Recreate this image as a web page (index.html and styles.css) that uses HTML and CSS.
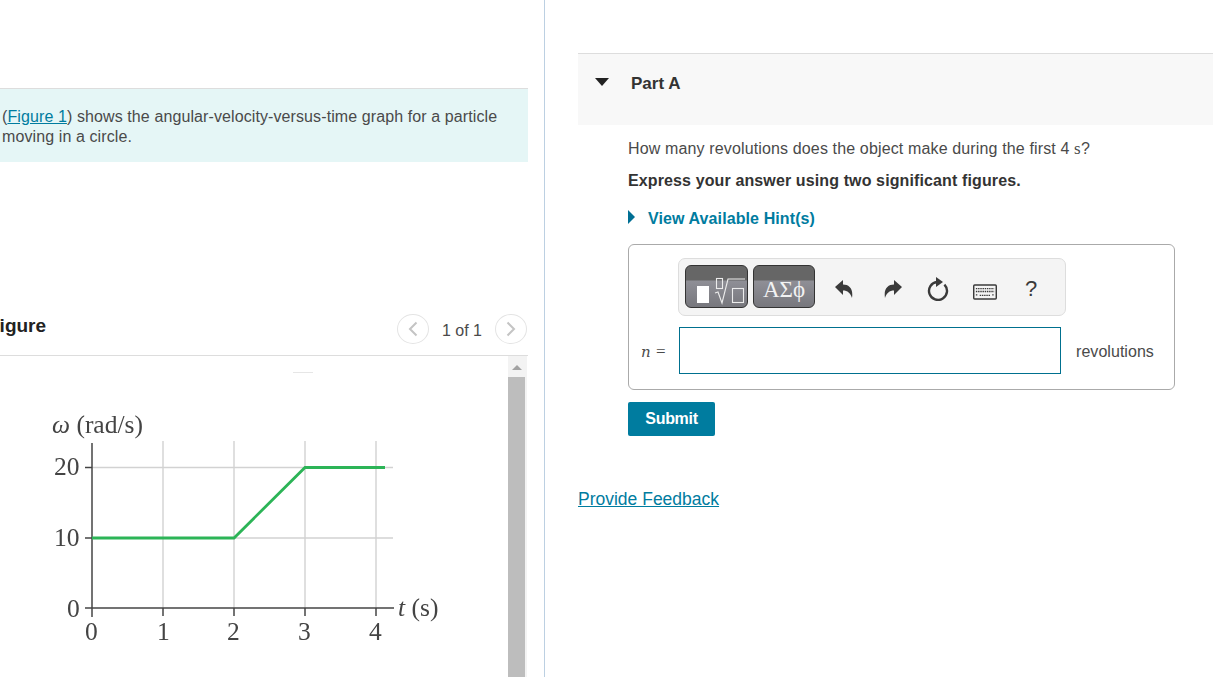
FILE: index.html
```html
<!DOCTYPE html>
<html lang="en">
<head>
<meta charset="utf-8">
<title>Part A</title>
<link rel="stylesheet" href="styles.css">
</head>
<body>
<div class="page">
  <section class="left">
    <p class="intro">(<a href="#">Figure 1</a>) shows the angular-velocity-versus-time graph for a particle moving in a circle.</p>
    <header class="fig-head">
      <h2 class="fig-title">Figure</h2>
      <div class="pager">
        <span class="page-btn"><svg width="10" height="16" viewBox="0 0 10 16"><path d="M8.5 1.500 2 8l6.500 6.500" fill="none" stroke="#c4c4c4" stroke-width="2"/></svg></span>
        <span class="page-count">1 of 1</span>
        <span class="page-btn"><svg width="10" height="16" viewBox="0 0 10 16"><path d="M1.500 1.500 8 8l-6.500 6.500" fill="none" stroke="#c4c4c4" stroke-width="2"/></svg></span>
      </div>
    </header>
    <div class="fig-body">
      <svg class="graph" width="508" height="321" viewBox="0 356 508 321">
        <line x1="293" y1="372.5" x2="313" y2="372.5" stroke="#e6e6e6"/>
        <g stroke="#d2d2d2" stroke-width="1.4">
          <line x1="163" y1="441" x2="163" y2="608"/>
          <line x1="234" y1="441" x2="234" y2="608"/>
          <line x1="305" y1="441" x2="305" y2="608"/>
          <line x1="376" y1="441" x2="376" y2="608"/>
          <line x1="92" y1="467.500" x2="393" y2="467.500"/>
          <line x1="92" y1="538" x2="393" y2="538"/>
        </g>
        <g stroke="#444" stroke-width="1.500">
          <line x1="92" y1="443" x2="92" y2="617"/>
          <line x1="85" y1="608" x2="394" y2="608"/>
          <line x1="85" y1="467.500" x2="92" y2="467.500"/>
          <line x1="85" y1="538" x2="92" y2="538"/>
          <line x1="163" y1="608" x2="163" y2="616"/>
          <line x1="234" y1="608" x2="234" y2="616"/>
          <line x1="305" y1="608" x2="305" y2="616"/>
          <line x1="376" y1="608" x2="376" y2="616"/>
        </g>
        <polyline points="92,538 234,538 305,467.500 385,467.500" fill="none" stroke="#2cb457" stroke-width="2.800"/>
        <g class="g-text">
          <text x="52" y="433"><tspan class="g-ital">ω</tspan> (rad/s)</text>
          <text x="54" y="475">20</text>
          <text x="54" y="546">10</text>
          <text x="67" y="617">0</text>
          <text x="85" y="640">0</text>
          <text x="157" y="640">1</text>
          <text x="227" y="640">2</text>
          <text x="298" y="640">3</text>
          <text x="369" y="640">4</text>
          <text x="398" y="616"><tspan class="g-ital">t</tspan> (s)</text>
        </g>
      </svg>
      <div class="scrollbar">
        <span class="scroll-up"></span>
        <span class="scroll-thumb"></span>
      </div>
    </div>
  </section>
  <main class="right">
    <div class="part-head">
      <span class="caret-down"></span>
      <h1 class="part-title">Part A</h1>
    </div>
    <div class="part-body">
      <p class="question">How many revolutions does the object make during the first 4 <span class="unit">s</span>?</p>
      <p class="instruction">Express your answer using two significant figures.</p>
      <a class="hint" href="#"><span class="caret-right"></span>View Available Hint(s)</a>
      <div class="answer">
        <div class="toolbar">
          <span class="tpl-btn tpl-wide">
            <svg width="61" height="41" viewBox="0 0 61 41">
              <rect x="11" y="20" width="12" height="17" fill="#fff"/>
              <g fill="none" stroke="#ececec" stroke-width="1.100">
                <rect x="30.500" y="12.500" width="6" height="10"/>
                <rect x="46.500" y="22.500" width="11" height="14"/>
                <path d="M29 27l3-1 4 11 6-24h17"/>
              </g>
            </svg>
          </span>
          <span class="tpl-btn tpl-greek">ΑΣϕ</span>
          <span class="tool tool-undo"><svg width="18" height="20" viewBox="0 0 18 20"><path d="M0 8 8 1v4.500c6 0 10.500 4 9 13.500-1.500-5-4.500-7.500-9-7.500V16z" fill="#3a3a3a"/></svg></span>
          <span class="tool tool-redo"><svg width="18" height="20" viewBox="0 0 18 20"><path d="M18 8 10 1v4.500c-6 0-10.500 4-9 13.500 1.500-5 4.500-7.500 9-7.500V16z" fill="#3a3a3a"/></svg></span>
          <span class="tool tool-reset"><svg width="22" height="24" viewBox="0 0 22 24"><path d="M17.400 7.600A9 9 0 1 1 10 5" fill="none" stroke="#3a3a3a" stroke-width="2.400"/><path d="M9 0v10l7-5z" fill="#3a3a3a"/></svg></span>
          <span class="tool tool-keys"><svg width="25" height="16" viewBox="0 0 25 16"><rect x=".75" y=".75" width="23.500" height="14.500" rx="1" fill="#f4f4f4" stroke="#3a3a3a" stroke-width="1.500"/><path d="M3 4.500h19M3 7.500h19M3 11h2M7 11.500h11M20 11h2" stroke="#3a3a3a" stroke-width="1.500" stroke-dasharray="1.500 .8"/></svg></span>
          <span class="tool tool-help">?</span>
        </div>
        <div class="entry">
          <label class="var"><i class="var-n">n</i> =</label>
          <div class="field"></div>
          <span class="units">revolutions</span>
        </div>
      </div>
      <button class="submit" type="button">Submit</button>
    </div>
    <a class="feedback" href="#">Provide Feedback</a>
  </main>
</div>
</body>
</html>
```
FILE: styles.css
```css
* { box-sizing: border-box; }
html, body { margin: 0; height: 100%; }
body {
  font-family: "Liberation Sans", Arial, sans-serif;
  font-size: 16px;
  color: #4a4a4a;
  background: #fff;
  overflow: hidden;
}
a { color: #007c9f; }
.page { display: flex; height: 677px; overflow: hidden; }

/* left pane */
.left {
  width: 545px;
  flex: none;
  padding: 88px 16px 0 0;
  border-right: 1px solid #bcd0e2;
  overflow: hidden;
}
.intro {
  margin: 0;
  height: 74px;
  padding: 18px 20px 0 2px;
  line-height: 20px;
  letter-spacing: .1px;
  background: #e5f6f6;
  border-top: 1px solid #ddd;
}
.fig-head {
  display: flex;
  align-items: flex-start;
  justify-content: space-between;
  height: 42px;
  margin-top: 152px;
  border-bottom: 1px solid #ddd;
}
.fig-title {
  margin: 2px 0 0 -12px;
  font-size: 19px;
  line-height: 20px;
  font-weight: bold;
  color: #222;
}
.pager { display: flex; align-items: flex-start; margin-right: 1px; }
.page-btn {
  width: 32px;
  height: 30px;
  border: 1px solid #e4e4e4;
  border-radius: 50%;
  display: flex;
  align-items: center;
  justify-content: center;
}
.page-count { margin: 7px 13px 0; line-height: 20px; }
.fig-body { display: flex; height: 321px; }
.graph { display: block; flex: none; filter: blur(.3px); }
.g-text { font-family: "Liberation Serif", "Times New Roman", serif; font-size: 25.5px; fill: #444; }
.g-ital { font-style: italic; }
.scrollbar {
  width: 19px;
  background: #f3f3f3;
  display: flex;
  flex-direction: column;
  align-items: flex-start;
}
.scroll-up {
  margin: 9px 0 0 4px;
  border-left: 5px solid transparent;
  border-right: 5px solid transparent;
  border-bottom: 5px solid #a3a3a3;
}
.scroll-thumb { width: 17px; flex: 1; margin-top: 7px; background: #bdbdbd; }

/* right pane */
.right { flex: 1; min-width: 0; padding: 53px 0 0 33px; }
.part-head {
  display: flex;
  align-items: flex-start;
  height: 72px;
  padding: 20px 0 0 17px;
  background: #f8f8f8;
  border-top: 1px solid #ddd;
}
.caret-down {
  margin-top: 4px;
  border-left: 7px solid transparent;
  border-right: 7px solid transparent;
  border-top: 8px solid #222;
}
.part-title {
  margin: 0 0 0 22px;
  font-size: 17px;
  line-height: 20px;
  font-weight: bold;
  color: #333;
}
.part-body { padding: 14px 38px 0 50px; }
.question { margin: 0; line-height: 20px; letter-spacing: .14px; }
.unit { font-family: "Liberation Serif", serif; font-size: 17px; }
.instruction { margin: 12px 0 0; line-height: 20px; font-weight: bold; color: #333; letter-spacing: .12px; }
.hint {
  display: flex;
  align-items: center;
  margin-top: 18px;
  height: 20px;
  font-weight: bold;
  letter-spacing: .1px;
  text-decoration: none;
}
.caret-right {
  margin: -4px 13px 0 0;
  border-top: 7px solid transparent;
  border-bottom: 7px solid transparent;
  border-left: 7px solid #006f94;
}
.answer {
  margin-top: 15px;
  height: 146px;
  padding: 13px 20px 0 0;
  border: 1px solid #aaa;
  border-radius: 6px;
}
.toolbar {
  display: flex;
  align-items: flex-start;
  width: 388px;
  height: 58px;
  margin-left: 49px;
  padding: 6px 0 0 6px;
  background: #f4f4f4;
  border: 1px solid #ddd;
  border-radius: 7px;
}
.tpl-btn {
  display: flex;
  align-items: center;
  justify-content: center;
  height: 43px;
  border: 1px solid #333;
  border-radius: 6px;
  background: linear-gradient(#666 0, #666 14px, #8f8f96 15px, #77777d 100%);
  color: #f2f2f2;
}
.tpl-wide { width: 63px; margin-right: 5px; }
.tpl-greek {
  width: 62px;
  padding-top: 7px;
  font-family: "Liberation Serif", "DejaVu Serif", serif;
  font-size: 23px;
}
.tool {
  display: flex;
  align-items: center;
  justify-content: center;
  width: 24px;
  height: 43px;
  margin-top: 2px;
  color: #3a3a3a;
}
.tool-undo { margin-left: 17px; }
.tool-redo { margin-left: 25px; }
.tool-reset { margin-left: 21px; }
.tool-keys { margin-left: 23px; margin-top: 5px; }
.tool-help { margin-left: 22px; font-size: 22px; }
.entry { display: flex; align-items: center; margin-top: 11px; }
.var {
  width: 50px;
  padding: 2px 0 0 12px;
  font-family: "Liberation Serif", serif;
  font-size: 17px;
  word-spacing: 1px;
}
.var-n { font-family: "DejaVu Serif", serif; font-size: 15px; }
.field { width: 382px; height: 47px; border: 1px solid #00708f; background: #fff; }
.units { margin: 2px 0 0 15px; letter-spacing: .05px; }
.submit {
  display: block;
  margin-top: 12px;
  width: 87px;
  height: 34px;
  padding: 0;
  border: 0;
  border-radius: 2px;
  background: #007c9f;
  color: #fff;
  font: bold 16px "Liberation Sans", Arial, sans-serif;
  letter-spacing: -.3px;
}
.feedback { display: inline-block; margin-top: 52px; font-size: 17.500px; line-height: 22px; }
```
